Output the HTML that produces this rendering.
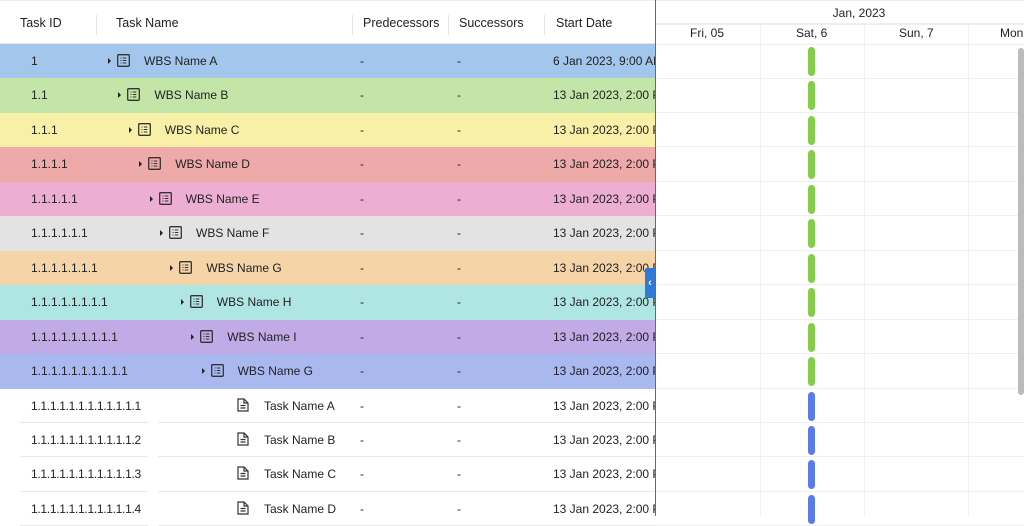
<!DOCTYPE html>
<html><head><meta charset="utf-8"><style>
*{box-sizing:border-box;margin:0;padding:0}
body{width:1024px;height:516px;overflow:hidden;background:#fff;font-family:"Liberation Sans",sans-serif;font-size:12px;color:#222;position:relative}
.hdr{position:absolute;top:0;height:44px;left:0;width:656px;border-top:1px solid #eee;border-bottom:1px solid #e6e6e6}
.hdr span{position:absolute;top:15px;font-size:12.5px;color:#222}
.hdr i{position:absolute;top:14px;height:20px;border-left:1px solid #e4e4e4}
.row{position:absolute;left:0;width:656px;height:34.5px;overflow:hidden}
.row span{position:absolute;top:10px;white-space:nowrap}
.arr{position:absolute;top:14px;width:0;height:0;border-top:3px solid transparent;border-bottom:3px solid transparent;border-left:3.5px solid #222}
.ic{position:absolute;top:10px}
.doc{position:absolute;top:9px}
.bar{position:absolute;left:808px;width:7px;border-radius:4px}
.vl{position:absolute;top:22px;bottom:0;border-left:1px solid #f0f0f0}
</style></head><body>
<div class="hdr">
<span style="left:20px">Task ID</span><i style="left:96px"></i>
<span style="left:116px">Task Name</span><i style="left:352px"></i>
<span style="left:363px">Predecessors</span><i style="left:448px"></i>
<span style="left:459px">Successors</span><i style="left:544px"></i>
<span style="left:556px">Start Date</span>
</div>
<div style="position:absolute;left:656px;top:0;width:368px;height:44px;border-top:1px solid #eee">
<div style="position:absolute;top:5px;left:0;width:406px;text-align:center">Jan, 2023</div>
<div style="position:absolute;top:22px;left:0;right:0;border-top:2px solid #eee;border-bottom:1px solid #eee;height:22px"></div>
<span style="position:absolute;top:25px;left:34px">Fri, 05</span>
<span style="position:absolute;top:25px;left:140px">Sat, 6</span>
<span style="position:absolute;top:25px;left:243px">Sun, 7</span>
<span style="position:absolute;top:25px;left:344px">Mon</span>
</div>
<div class="vl" style="left:760px"></div><div class="vl" style="left:864px"></div><div class="vl" style="left:968px"></div>
<div id="rows"></div>
<div style="position:absolute;left:655px;top:0;width:1px;height:516px;background:#3a6fc4"></div>
<div style="position:absolute;left:645px;top:268px;width:10px;height:30px;background:#2f7ad6;border-radius:2px 0 0 2px;color:#fff;font-size:11px;font-weight:bold;line-height:30px;text-align:center">‹</div>
<div style="position:absolute;left:1018px;top:48px;width:6px;height:347px;background:#bbb;border-radius:3px"></div>
<script>
var cols=["#a3c6ec","#c3e6a8","#f9f0a8","#eeaaa9","#edaed3","#e3e3e3","#f5d4a8","#afe5e3","#c0abe6","#aab8f0"];
var names="ABCDEFGHIG";var h="";var id="1";
var icon='<svg width="13" height="13" viewBox="0 0 13 13"><rect x="0.7" y="0.7" width="11.6" height="11.6" rx="1" fill="none" stroke="#333" stroke-width="1.3"/><path d="M3.5 4h1M3.5 6.5h1M3.5 9h1M5.8 4h3.5M5.8 6.5h3.5M5.8 9h3.5" stroke="#333" stroke-width="1"/></svg>';
for(var i=0;i<14;i++){var t=44+i*34.45;
 var wbs=i<10;
 if(i>0&&wbs)id+=".1";
 var tid=wbs?id:"1.1.1.1.1.1.1.1.1.1.1."+(i-9);
 h+='<div style="position:absolute;left:656px;width:368px;top:'+t+'px;height:34.5px;border-bottom:1px solid #f0f0f0"></div>';
 if(wbs){h+='<div class="row" style="top:'+t+'px;background:'+cols[i]+'"><span style="left:31px">'+tid+'</span><div class="arr" style="left:'+(108+i*10.4)+'px"></div><div class="ic" style="left:'+(117+i*10.4)+'px">'+icon+'</div><span style="left:'+(144+i*10.4)+'px">WBS Name '+names[i]+'</span>';}
 else{h+='<div class="row" style="top:'+t+'px"><span style="left:31px;letter-spacing:-0.3px">'+tid+'</span><svg class="doc" style="left:237px" width="12" height="14" viewBox="0 0 12 14"><path d="M1 1h6l4 4v8H1z M7 1v4h4 M3.5 7.5h5 M3.5 10h5" fill="none" stroke="#333" stroke-width="1.2"/></svg><span style="left:264px">Task Name '+"ABCD"[i-10]+'</span><div style="position:absolute;bottom:0;left:20px;width:128px;border-bottom:1px solid #e8e8e8"></div><div style="position:absolute;bottom:0;left:158px;width:498px;border-bottom:1px solid #e8e8e8"></div>';}
 h+='<span style="left:360px">-</span><span style="left:457px">-</span><span style="left:553px">'+(i==0?"6 Jan 2023, 9:00 AM":"13 Jan 2023, 2:00 PM")+'</span></div>';
 h+='<div class="bar" style="top:'+(t+3)+'px;height:29px;background:'+(wbs?"#84cc4a":"#5b7be8")+'"></div>';
}
document.getElementById("rows").innerHTML=h;
</script>
</body></html>
